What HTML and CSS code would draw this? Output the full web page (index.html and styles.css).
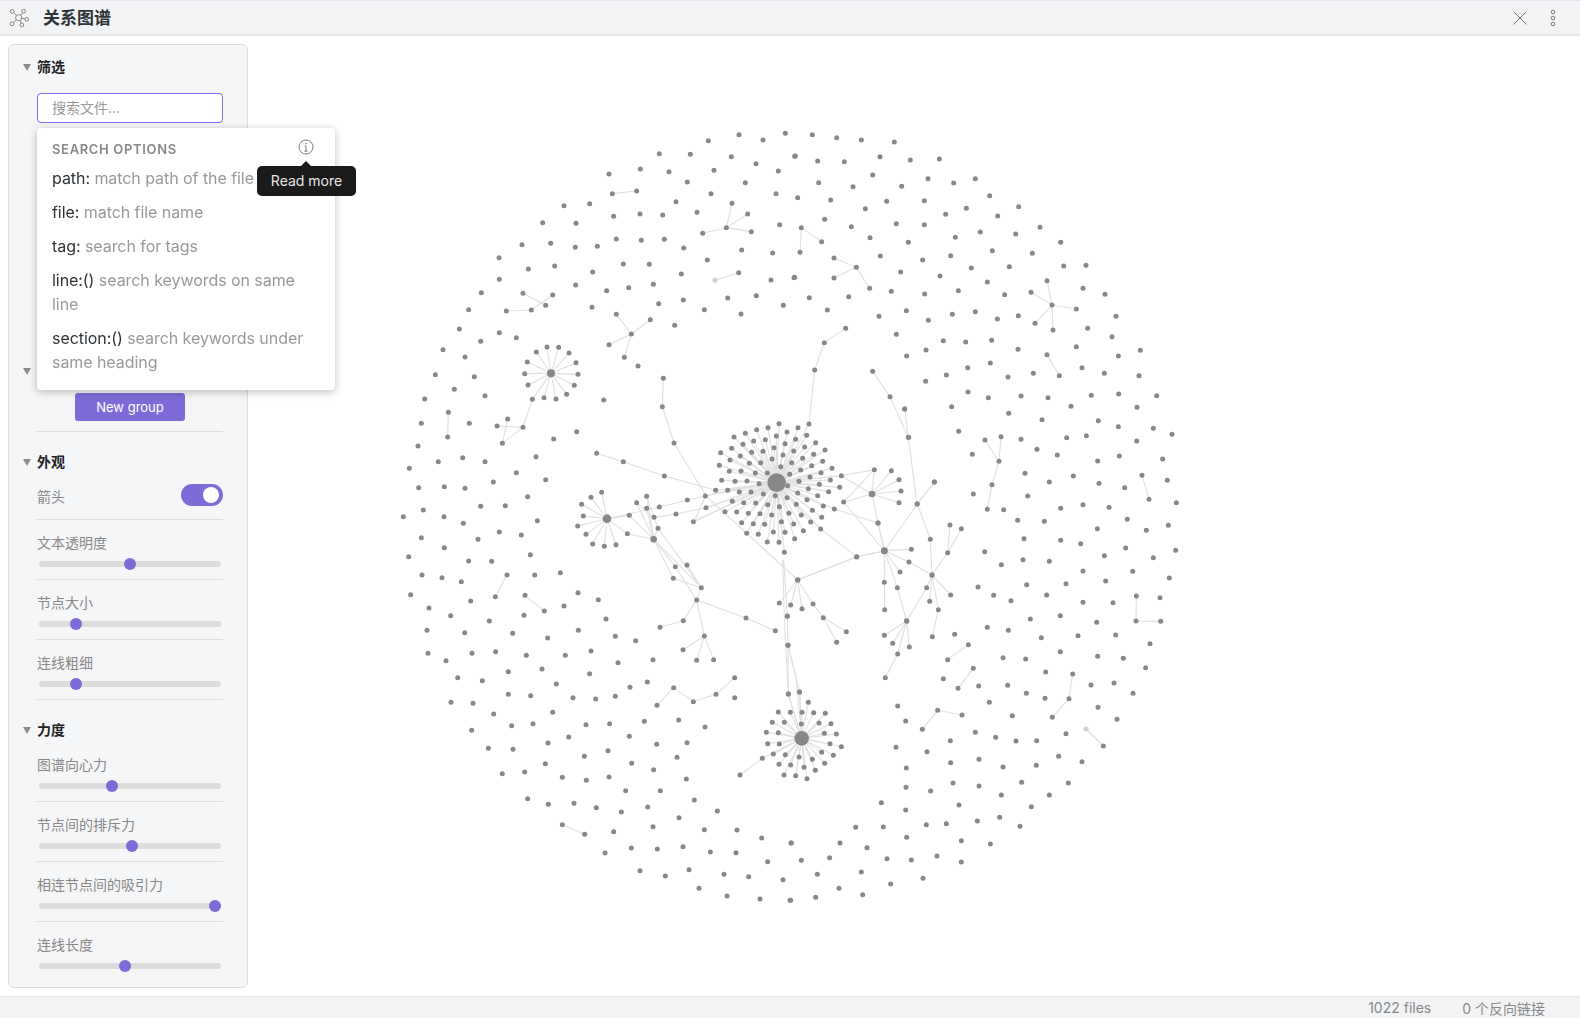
FILE: index.html
```html
<!DOCTYPE html>
<html lang="zh">
<head>
<meta charset="utf-8">
<title>关系图谱</title>
<link rel="stylesheet" href="styles.css">
</head>
<body>
<header class="titlebar">
  <svg class="title-icon" viewBox="0 0 20 20" width="20" height="20" fill="none" stroke="#8a8a8a" stroke-width="1">
    <circle cx="9.7" cy="9.7" r="3.1"/>
    <circle cx="3.2" cy="3.4" r="1.9"/>
    <circle cx="14.6" cy="3.2" r="1.9"/>
    <circle cx="17.8" cy="11.3" r="1.9"/>
    <circle cx="3" cy="15.8" r="1.9"/>
    <circle cx="12.8" cy="17" r="1.9"/>
    <path d="M4.6 4.8 7.5 7.6M13.6 4.8 11.6 7.4M16 11 12.8 10.2M4.6 14.8 7.2 11.7M12.4 15.1 11 12.5"/>
  </svg>
  <h1 class="title">关系图谱</h1>
  <div class="title-actions">
    <svg class="close-icon" viewBox="0 0 14 14" width="14" height="14" fill="none" stroke="#808080" stroke-width="1"><path d="M.5.5 13.5 13.5M13.5.5.5 13.5"/></svg>
    <svg class="more-icon" viewBox="0 0 6 18" width="6" height="18" fill="none" stroke="#7a7a7a" stroke-width="1"><circle cx="3" cy="3" r="1.8"/><circle cx="3" cy="9" r="1.8"/><circle cx="3" cy="15" r="1.8"/></svg>
  </div>
</header>

<main class="stage">
  <canvas id="graph" class="graph" width="1580" height="960"></canvas>

  <aside class="panel">
    <div class="heading heading-first"><span class="tri"></span>筛选</div>
    <div class="search">搜索文件...</div>

    <div class="heading heading-groups"><span class="tri"></span>组</div>
    <div class="btn-row"><button class="btn">New group</button></div>
    <div class="rule"></div>

    <div class="heading heading-section"><span class="tri"></span>外观</div>
    <div class="toggle-row">
      <span class="label toggle-label">箭头</span>
      <span class="toggle"><span class="knob"></span></span>
    </div>
    <div class="slider-row"><div class="label">文本透明度</div><div class="track"><span class="thumb" style="left:85px"></span></div></div>
    <div class="slider-row"><div class="label">节点大小</div><div class="track"><span class="thumb" style="left:31px"></span></div></div>
    <div class="slider-row"><div class="label">连线粗细</div><div class="track"><span class="thumb" style="left:31px"></span></div></div>

    <div class="heading heading-section heading-force"><span class="tri"></span>力度</div>
    <div class="slider-row"><div class="label">图谱向心力</div><div class="track"><span class="thumb" style="left:67px"></span></div></div>
    <div class="slider-row"><div class="label">节点间的排斥力</div><div class="track"><span class="thumb" style="left:87px"></span></div></div>
    <div class="slider-row"><div class="label">相连节点间的吸引力</div><div class="track"><span class="thumb" style="left:170px"></span></div></div>
    <div class="slider-row slider-last"><div class="label">连线长度</div><div class="track"><span class="thumb" style="left:80px"></span></div></div>
  </aside>

  <section class="popup">
    <div class="popup-head">
      <span class="popup-title">SEARCH OPTIONS</span>
      <svg class="info" viewBox="0 0 16 16" width="16" height="16" fill="none" stroke="#7e7e7e" stroke-width="1"><circle cx="8" cy="8" r="7"/><path d="M8 7v5M6.4 12.2h3.2M6.6 7h1.4" /><circle cx="8" cy="4.6" r=".5"/></svg>
    </div>
    <div class="opt"><span class="key">path:</span> match path of the file</div>
    <div class="opt"><span class="key">file:</span> match file name</div>
    <div class="opt"><span class="key">tag:</span> search for tags</div>
    <div class="opt"><span class="key">line:()</span> search keywords on same line</div>
    <div class="opt"><span class="key">section:()</span> search keywords under same heading</div>
  </section>

  <div class="tooltip">Read more</div>
</main>

<footer class="status">
  <span>1022 files</span>
  <span>0 个反向链接</span>
</footer>
<script src="graph.js"></script>
</body>
</html>
```
FILE: styles.css
```css
* { box-sizing: border-box; }
html, body { height: 100%; }
body {
  margin: 0;
  height: 100vh;
  overflow: hidden;
  display: flex;
  flex-direction: column;
  background: #fff;
  color: #2e3338;
  font-family: Inter, "Noto Sans CJK SC", sans-serif;
  font-size: 14px;
}

.titlebar {
  flex: 0 0 36px;
  display: flex;
  align-items: center;
  padding-left: 9px;
  background: #f2f3f5;
  border-top: 1px solid #e6e7ea;
  border-bottom: 2px solid #e3e5e8;
}
.title-icon { display: block; }
.title {
  margin: 0 0 2px 14px;
  font-size: 17px;
  font-weight: 700;
  color: #2e3338;
}
.title-actions {
  margin-left: auto;
  display: flex;
  align-items: center;
  gap: 23px;
  padding-right: 24px;
}
.close-icon, .more-icon { display: block; }

.stage {
  position: relative;
  flex: 1 1 auto;
  min-height: 0;
  overflow: hidden;
}
.graph { display: block; }

.panel {
  position: absolute;
  left: 8px;
  top: 8px;
  width: 240px;
  height: 944px;
  padding: 0 24px 0 28px;
  background: #f5f6f8;
  border: 1px solid #dcddde;
  border-radius: 6px;
}

.heading {
  position: relative;
  height: 20px;
  line-height: 20px;
  font-size: 14px;
  font-weight: 700;
  color: #1f2328;
}
.heading-first { margin-top: 12px; }
.heading-groups { margin-top: 238px; }
.heading-section { margin-top: 20px; }
.tri {
  position: absolute;
  left: -14px;
  top: 7px;
  width: 0;
  height: 0;
  border-left: 4px solid transparent;
  border-right: 4px solid transparent;
  border-top: 7px solid #8e8e8e;
}

.search {
  height: 30px;
  margin-top: 16px;
  padding-left: 14px;
  line-height: 28px;
  color: #999;
  font-size: 14px;
  background: #fff;
  border: 1px solid #7f6df2;
  border-radius: 4px;
}

.btn-row { display: flex; justify-content: center; margin-top: 12px; }
.btn {
  width: 110px;
  height: 28px;
  padding: 0;
  border: 0;
  border-radius: 3px;
  background: #7f6bd8;
  color: #fff;
  font: 13px Inter, sans-serif;
}
.rule { height: 1px; margin-top: 10px; background: #dcddde; }

.label { height: 20px; line-height: 20px; color: #888; font-size: 14px; }
.toggle-label { margin-top: 4px; }

.toggle-row {
  display: flex;
  align-items: center;
  justify-content: space-between;
  margin-top: 12px;
  padding-bottom: 13px;
  border-bottom: 1px solid #dcddde;
  box-sizing: content-box;
  height: 22px;
}
.toggle {
  position: relative;
  width: 42px;
  height: 22px;
  border-radius: 11px;
  background: #7f6bd8;
}
.knob {
  position: absolute;
  right: 4px;
  top: 3px;
  width: 16px;
  height: 16px;
  border-radius: 50%;
  background: #fff;
}

.slider-row {
  height: 60px;
  padding-top: 13px;
  border-bottom: 1px solid #dcddde;
}
.slider-last { border-bottom: 0; }
.heading-force + .slider-row { margin-top: 2px; }
.track {
  position: relative;
  height: 6px;
  margin: 8px 2px 0;
  border-radius: 3px;
  background: #dcdcdc;
}
.thumb {
  position: absolute;
  top: -3px;
  width: 12px;
  height: 12px;
  border-radius: 50%;
  background: #7f6bd8;
}

.popup {
  position: absolute;
  left: 37px;
  top: 92px;
  width: 298px;
  height: 262px;
  padding: 0 15px;
  background: #fff;
  border-radius: 4px;
  box-shadow: 0 2px 8px rgba(0, 0, 0, .25);
  font-size: 16px;
  line-height: 24px;
  letter-spacing: -.06px;
  color: #999;
}
.popup-head {
  display: flex;
  align-items: center;
  justify-content: space-between;
  height: 26px;
  padding-top: 8px;
  box-sizing: content-box;
}
.popup-title {
  font-size: 13px;
  font-weight: 600;
  letter-spacing: .05em;
  color: #888;
}
.info { margin-right: 6px; margin-top: -4px; }
.opt { margin-top: 10px; }
.popup-head + .opt { margin-top: 4px; }
.key { color: #2e3338; }

.tooltip {
  position: absolute;
  left: 257px;
  top: 130px;
  width: 99px;
  height: 30px;
  line-height: 30px;
  text-align: center;
  border-radius: 5px;
  background: #1a1a1a;
  color: #e6e6e6;
  font-size: 14px;
}
.tooltip::before {
  content: "";
  position: absolute;
  left: 44px;
  top: -5px;
  border-left: 5px solid transparent;
  border-right: 5px solid transparent;
  border-bottom: 5px solid #1a1a1a;
}

.status {
  flex: 0 0 22px;
  display: flex;
  justify-content: flex-end;
  align-items: center;
  gap: 31px;
  padding-right: 35px;
  background: #f2f3f5;
  border-top: 1px solid #e3e5e8;
  color: #888;
  font-size: 14px;
}
```
FILE: graph.js
```javascript
(function () {
  var canvas = document.getElementById('graph');
  var ctx = canvas.getContext('2d');
  var TOP = 36;
  var EDGE = '#e0e0e0', DOT = '#888888', FAINT = '#cfcfcf';
  var R = 2.5;
  var edges = [], dots = [];

  function frame(ox, oy) {
    return function (x, y) { return [ox + x / 3, oy + y / 3 - TOP]; };
  }
  function addDots(p, list, r, color) {
    for (var i = 0; i < list.length; i += 2) {
      var q = p(list[i], list[i + 1]);
      dots.push([q[0], q[1], r || R, color || DOT]);
    }
  }
  function addPaths(p, paths) {
    paths.forEach(function (a) {
      var pts = [];
      for (var i = 0; i < a.length; i += 2) pts.push(p(a[i], a[i + 1]));
      edges.push(pts);
    });
  }
  function fan(p, hx, hy, list) {
    for (var i = 0; i < list.length; i += 2) {
      edges.push([p(hx, hy), p(list[i], list[i + 1])]);
    }
  }

  /* top-left quadrant */
  var a = frame(395, 125);
  addDots(a, [940,47,1032,29,1104,45,1171,25,793,86,886,88,1009,95,1083,116,1199,94,642,147,736,132,822,140,957,136,1150,138,877,171,1051,173,652,206,725,198,948,206,1143,206,843,230,1011,235,507,242,584,236,656,274,735,267,803,270,906,262,1058,267,443,293,543,295,1154,299,994,308,1069,320,923,325,381,359,467,355,541,367,607,364,664,342,739,346,808,343,866,369,1040,375,1133,384,312,398,937,405,400,432,479,423,593,441,685,417,763,418,859,447,1031,443,1128,465,1197,458,313,463,542,480,635,497,701,488,775,478,259,503,384,505,473,510,865,525,791,536,998,519,1084,512,452,541,1165,541,221,554,334,558,409,555,591,547,928,554,1038,567,664,568,766,584,839,601,193,612,313,623,364,638,709,627,642,659,257,649,144,674,688,697,210,696,729,723,121,749,238,755,424,681,456,666,491,667,522,684,543,713,549,748,538,781,515,808,483,822,447,818,412,823,399,780,389,746,397,711,805,760,178,793,89,822,270,812,626,825,160,862,79,895,223,895,338,882,306,903,384,907,322,955,158,936,476,942,545,920,69,963,203,998,130,1010,270,1010,423,995,43,1030,364,1043,295,1071,452,1064,71,1088,148,1085,210,1090,398,1115,257,1144,331,1142,85,1155]);
  addDots(a, [960,466], R, FAINT);
  addDots(a, [468,745], 4);
  addPaths(a, [[652,206,725,198],[1011,235,994,308],[1058,267,994,308],[1069,320,994,308],[923,325,994,308],[960,466,1031,443],[384,505,452,541],[473,510,409,555,334,558],[664,568,709,627],[766,584,709,627],[642,659,709,627],[688,697,709,627],[412,823,384,907,306,903],[384,907,322,955],[338,882,322,955],[160,862,158,936],[805,760,802,845]]);
  fan(a, 468, 745, [424,681,456,666,491,667,522,684,543,713,549,748,538,781,515,808,483,822,447,818,412,823,399,780,389,746,397,711]);

  /* top-right quadrant */
  var b = frame(790, 125);
  addDots(b, [67,29,140,38,214,45,313,51,16,93,83,108,163,110,270,95,361,105,448,102,86,173,189,185,248,150,335,184,414,161,491,174,556,161,23,218,122,225,226,251,290,229,403,227,599,212,686,245,529,250,467,268,623,273,104,283,184,305,319,296,403,299,34,308,95,350,30,382,240,338,355,352,496,337,571,321,677,327,750,307,812,352,607,377,727,385,132,399,199,427,132,459,271,393,398,405,482,392,14,457,332,441,450,453,544,429,658,425,821,423,888,421,592,471,771,467,239,490,304,499,404,507,505,497,644,509,723,502,879,490,945,508,58,518,176,515,786,540,859,552,112,555,349,557,267,574,415,586,487,568,556,560,622,582,685,572,735,595,978,574,789,615,893,610,167,610,319,628,966,635,103,653,460,647,527,651,605,646,408,675,684,673,350,693,771,689,859,665,985,693,1051,676,74,735,248,739,533,728,601,714,876,728,808,752,943,745,730,745,654,756,1047,752,469,750,407,769,534,801,595,818,693,813,774,818,904,811,986,807,1100,812,300,815,485,845,843,844,1041,847,656,865,756,884,925,887,985,905,1090,910,1146,928,506,919,585,945,633,935,693,943,830,938,889,932,1040,948,741,973,547,988,802,990,923,1008,988,993,1118,1002,627,1009,705,1045,850,1053,1056,1051,778,1071,927,1075,1004,1088,1132,1066,606,1079,550,1107,713,1113,1077,1123,592,1153,641,1154,812,1150,879,1139,957,1147,1159,1133,433,1071,344,852,355,937,381,1137]);
  addPaths(b, [[95,350,34,308,30,382],[132,399,199,427,239,490],[132,459,199,427],[771,467,786,540],[723,502,786,540],[859,552,786,540],[735,595,786,540],[789,615,786,540],[771,689,808,752],[167,610,103,653,74,735,57,897],[248,739,300,815,355,937,381,1137],[344,852,355,937],[433,1071,381,1137],[585,945,627,1009,606,1079,592,1153],[633,935,627,1009],[1056,1051,1077,1123]]);

  /* bottom-left quadrant */
  var c = frame(395, 515);
  addDots(c, [25,5,147,5,205,25,427,17,79,68,249,73,313,51,379,60,148,98,41,125,221,138,290,139,406,119,81,180,141,188,199,200,336,180,419,180,47,239,227,258,301,245,390,241,102,279,448,288,167,302,283,318,387,301,96,346,209,353,353,355,458,369,99,415,153,437,231,415,302,410,394,421,188,488,262,497,340,470,441,462,168,562,234,565,340,538,407,542,484,507,496,173,549,233,610,254,507,273,633,312,550,346,661,364,722,377,588,408,511,421,669,443,774,434,584,476,534,548,602,552,661,544,705,517,757,501,1019,548,786,571,836,518,895,560,963,538,1019,488,296,597,473,592,573,629,644,626,748,619,851,615,930,636,350,632,414,626,230,646,521,666,703,664,785,688,876,683,459,684,280,700,354,703,639,707,568,724,846,727,710,745,451,746,389,771,322,776,776,764,502,787,574,796,642,786,874,792,692,827,796,827,398,851,460,868,537,865,604,878,679,891,758,876,898,855,967,888,852,908,502,929,569,958,656,950,774,935,928,944,1026,945,1100,969,1188,984,630,1014,709,999,787,1002,864,995,946,1011,1023,1013,1118,1040,735,1067,811,1083,882,1064,987,1078,1061,1085,1164,1094,912,1120,996,1143,1095,1152,1185,1156]);
  addPaths(c, [[786,571,836,518,895,560,963,538,1019,488],[336,180,301,245],[390,241,448,288],[502,929,569,958]]);

  /* bottom-right quadrant */
  var d = frame(790, 515);
  addDots(d, [683,16,763,19,1012,13,922,41,1069,46,1135,31,702,71,812,76,872,86,1007,99,1157,106,584,110,943,122,1090,128,699,134,778,139,634,149,879,168,1028,169,947,198,1138,189,710,209,828,206,564,216,611,241,770,240,663,257,1039,243,1110,248,879,262,969,263,721,312,811,302,920,322,1038,318,1112,319,592,337,655,346,494,358,754,368,864,362,977,360,1080,386,535,389,473,434,639,428,707,432,811,410,923,424,1000,430,1067,458,550,460,460,491,504,520,767,471,848,477,566,513,653,511,709,535,765,550,837,551,903,510,972,504,1029,535,598,562,667,602,787,607,924,577,981,613,323,573,443,586,516,600,347,618,397,643,940,693,556,652,617,667,678,678,740,677,828,656,481,677,318,697,411,710,482,743,567,733,639,756,739,751,806,724,876,740,349,759,489,804,567,813,695,802,835,804,348,817,422,828,634,840,778,840,507,870,724,875,274,863,347,885,562,918,629,907,690,934,409,929,469,926,197,937,280,936,350,967,514,977,601,987,4,984,150,984,231,998,34,1036,119,1028,291,1031,364,1035,441,1023,514,1041,82,1078,214,1071,302,1107,399,1090,147,1120,218,1139,77,1147,2,1156]);
  addDots(d, [888,642], R, FAINT);
  addDots(d, [364,103,357,141,330,171,283,202,322,218,284,284,421,73,480,30,514,41,473,113,482,240,410,218,419,259,445,284,427,365,200,126,264,24,283,361,308,385,358,396,323,417,286,488]);
  addDots(d, [426,180,350,318], 2.7);
  addDots(d, [283,107], 3.3);
  addPaths(d, [[1039,243,1038,318,1112,319],[535,389,473,434],[550,460,504,520],[848,477,837,551,787,607],[397,643,443,586,516,600],[888,642,940,693],
    [283,107,364,103],[283,107,357,141,426,180],[283,107,330,171],[283,107,283,202,284,284],[283,107,322,218,350,318],[283,107,264,24],[283,107,200,126,23,194],
    [421,73,426,180,410,218,350,318],[426,180,419,259],[426,180,445,284,427,365],[426,180,482,240],[426,180,473,113,480,30],[473,113,514,41],
    [350,318,283,361],[350,318,308,385],[350,318,358,396],[350,318,323,417,286,488]]);

  /* centre cluster and branches */
  var e = frame(560, 400);
  var ring = [657,71,624,83,590,89,556,100,522,111,681,96,714,83,747,72,649,108,616,119,581,123,549,133,515,145,482,158,707,118,740,106,675,131,767,128,642,143,609,154,575,157,541,168,510,180,478,196,701,153,734,141,795,150,669,165,761,163,636,177,602,188,568,190,728,175,695,188,788,184,662,200,755,197,508,214,543,213,586,219,622,219,722,210,689,223,816,205,783,218,844,227,750,231,485,241,525,244,561,243,597,251,717,244,811,240,683,257,778,253,839,262,745,266,467,271,503,271,538,276,573,276,610,282,806,275,646,287,713,279,773,287,681,293,741,299,517,304,551,308,587,309,623,314,658,320,709,313,790,318,823,327,757,331,530,336,565,340,600,341,635,345,687,340,724,345,785,352,495,335,545,368,580,371,614,373,664,365,701,372,752,366,560,400,595,403,640,396,675,397,730,392,782,387,622,426,657,427,704,416,436,288,438,323,400,365,673,457];
  addDots(e, ring);
  fan(e, 650, 248, ring);
  addDots(e, [650,248], 9.3);
  addDots(e, [307,20,342,129,110,160,190,185,313,228,125,277,93,292,65,313,70,348,53,378,78,403,98,432,133,439,168,434,202,401,208,346,298,321,382,300,282,352,348,342,230,308,260,289,260,325,294,385,381,495,346,500,340,535,424,563,410,600,300,682,370,662,433,708,369,749,410,781,461,779,558,654,646,692,682,648,684,736,685,882,719,876,658,609,692,615,726,626,759,612,790,653,859,695,830,727,943,209,994,212,1017,239,1023,273,1017,308,851,306,954,369,890,470,1123,246,1072,312,1034,27,1046,112]);
  addDots(e, [713,540], 2.8);
  addDots(e, [281,418,936,282,973,453], 3.3);
  addDots(e, [141,356], 4.3);
  fan(e, 141, 356, [125,277,93,292,65,313,70,348,53,378,78,403,98,432,133,439,168,434,202,401,208,346]);
  addPaths(e, [[342,129,307,20],[342,129,440,290,713,540],[110,160,190,185,313,228,467,271],
    [141,356,298,321,436,288,503,271,650,248],[282,352,348,342,438,323,650,248],[400,365,650,248],[436,288,405,360],
    [281,418,230,308],[281,418,260,289],[281,418,260,325],[281,418,294,385],[281,418,202,401],[281,418,208,346],[260,289,294,385,424,563],[230,308,282,352],[281,418,346,500,410,600],[281,418,340,535,424,563],[281,418,424,563],[424,563,410,600],[381,495,424,563],
    [410,600,370,662,300,682],[410,600,433,708],[433,708,369,749],[433,708,410,781],[433,708,461,779],[410,600,558,654,646,692],
    [713,540,658,609],[713,540,692,615],[713,540,726,626],[713,540,759,612,790,653,859,695],[790,653,830,727],[713,540,890,470,973,453],
    [843,227,943,209],[843,227,936,282],[851,306,943,209],[851,306,936,282],[936,282,943,209],[936,282,994,212],[936,282,1017,239],[936,282,1023,273],[936,282,1017,308],[936,282,954,369,973,453],[851,306,973,453],[823,327,954,369],[782,387,890,470],
    [973,453,1072,312,1123,246],[1072,312,1111,418]]);

  /* lower cluster */
  var f = frame(740, 560);
  var ring2 = [115,456,151,457,186,457,221,458,256,460,97,487,133,487,184,492,237,489,273,491,79,517,115,518,253,520,289,522,83,551,118,552,270,551,304,560,100,582,136,584,245,577,280,586,117,613,152,615,177,591,217,598,254,610,132,645,167,647,192,622,226,631,201,656,145,402,179,396,205,427,67,595];
  addDots(f, ring2);
  addDots(f, [0,645,142,169,144,256]);
  fan(f, 185, 535, ring2);
  addDots(f, [185,535], 7.3);
  addPaths(f, [[0,645,67,595],[131,0,142,169,144,256,145,402,185,535],[128,0,134,200,145,402],[144,256,179,396,185,535],[144,256,168,350,185,535]]);

  /* draw */
  ctx.strokeStyle = EDGE;
  ctx.lineWidth = 1.1;
  edges.forEach(function (pts) {
    ctx.beginPath();
    pts.forEach(function (q, i) { if (i) ctx.lineTo(q[0], q[1]); else ctx.moveTo(q[0], q[1]); });
    ctx.stroke();
  });
  dots.forEach(function (n) {
    ctx.fillStyle = n[3];
    ctx.beginPath();
    ctx.arc(n[0], n[1], n[2], 0, Math.PI * 2);
    ctx.fill();
  });
})();
```
